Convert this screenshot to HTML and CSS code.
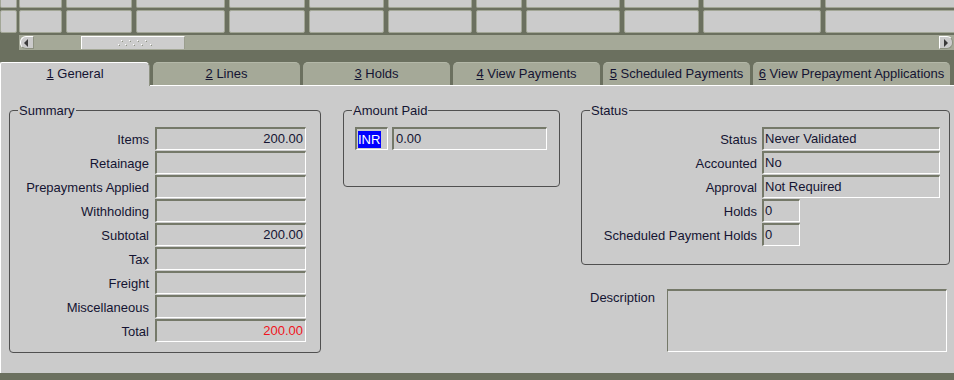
FILE: index.html
```html
<!DOCTYPE html>
<html>
<head>
<meta charset="utf-8">
<link rel="stylesheet" href="styles.css">
</head>
<body>
<div class="table">
  <div class="row row-top">
    <div class="cell"></div><div class="cell"></div><div class="cell"></div><div class="cell"></div>
    <div class="cell"></div><div class="cell"></div><div class="cell"></div><div class="cell"></div>
    <div class="cell"></div><div class="cell"></div><div class="cell"></div><div class="cell"></div>
  </div>
  <div class="row row-main">
    <div class="cell"></div><div class="cell"></div><div class="cell"></div><div class="cell"></div>
    <div class="cell"></div><div class="cell"></div><div class="cell"></div><div class="cell"></div>
    <div class="cell"></div><div class="cell"></div><div class="cell"></div><div class="cell"></div>
  </div>
  <div class="hscroll">
    <div class="sb-btn sb-left">
      <svg width="6" height="8" viewBox="0 0 6 8"><path d="M4 0 L4 8 L0 4 Z" fill="#3a3a3a"/></svg>
    </div>
    <div class="thumb">
      <svg width="36" height="7" viewBox="0 0 36 7">
        <g fill="#ffffff">
          <rect x="3" y="0" width="1" height="1"/><rect x="11" y="0" width="1" height="1"/><rect x="19" y="0" width="1" height="1"/><rect x="27" y="0" width="1" height="1"/>
          <rect x="0" y="4" width="1" height="1"/><rect x="7" y="4" width="1" height="1"/><rect x="15" y="4" width="1" height="1"/><rect x="23" y="4" width="1" height="1"/><rect x="32" y="4" width="1" height="1"/>
        </g>
        <g fill="#8e9282">
          <rect x="4" y="1" width="1" height="1"/><rect x="12" y="1" width="1" height="1"/><rect x="20" y="1" width="1" height="1"/><rect x="28" y="1" width="1" height="1"/>
          <rect x="1" y="5" width="1" height="1"/><rect x="8" y="5" width="1" height="1"/><rect x="16" y="5" width="1" height="1"/><rect x="24" y="5" width="1" height="1"/><rect x="33" y="5" width="1" height="1"/>
        </g>
      </svg>
    </div>
    <div class="sb-fill"></div>
    <div class="sb-btn sb-right">
      <svg width="6" height="8" viewBox="0 0 6 8"><path d="M1 0 L1 8 L5 4 Z" fill="#3a3a3a"/></svg>
    </div>
  </div>
</div>

<div class="tabs">
  <div class="tab active"><u>1</u> General</div>
  <div class="tab"><u>2</u> Lines</div>
  <div class="tab"><u>3</u> Holds</div>
  <div class="tab"><u>4</u> View Payments</div>
  <div class="tab"><u>5</u> Scheduled Payments</div>
  <div class="tab tab-wide"><u>6</u> View Prepayment Applications</div>
</div>

<div class="panel">
  <fieldset class="box summary">
    <legend>Summary</legend>
    <div class="box-body">
      <div class="frow"><span class="lbl">Items</span><div class="field num">200.00</div></div>
      <div class="frow"><span class="lbl">Retainage</span><div class="field num"></div></div>
      <div class="frow"><span class="lbl">Prepayments Applied</span><div class="field num"></div></div>
      <div class="frow"><span class="lbl">Withholding</span><div class="field num"></div></div>
      <div class="frow"><span class="lbl">Subtotal</span><div class="field num">200.00</div></div>
      <div class="frow"><span class="lbl">Tax</span><div class="field num"></div></div>
      <div class="frow"><span class="lbl">Freight</span><div class="field num"></div></div>
      <div class="frow"><span class="lbl">Miscellaneous</span><div class="field num"></div></div>
      <div class="frow"><span class="lbl">Total</span><div class="field num red">200.00</div></div>
    </div>
  </fieldset>

  <fieldset class="box amount">
    <legend>Amount Paid</legend>
    <div class="box-body amount-body">
      <div class="field cur"><span class="sel">INR</span></div>
      <div class="field amt">0.00</div>
    </div>
  </fieldset>

  <div class="col3">
    <fieldset class="box status">
      <legend>Status</legend>
      <div class="box-body">
        <div class="srow"><span class="lbl">Status</span><div class="field txt">Never Validated</div></div>
        <div class="srow"><span class="lbl">Accounted</span><div class="field txt">No</div></div>
        <div class="srow"><span class="lbl">Approval</span><div class="field txt">Not Required</div></div>
        <div class="srow"><span class="lbl">Holds</span><div class="field txt short">0</div></div>
        <div class="srow"><span class="lbl">Scheduled Payment Holds</span><div class="field txt short">0</div></div>
      </div>
    </fieldset>
    <div class="desc">
      <span class="desc-lbl">Description</span>
      <div class="field desc-field"></div>
    </div>
  </div>
</div>
</body>
</html>
```

FILE: styles.css
```css
* { box-sizing: border-box; }

html, body {
  margin: 0;
  padding: 0;
}

body {
  width: 954px;
  height: 380px;
  overflow: hidden;
  background: #6b705f;
  font-family: "Liberation Sans", Arial, sans-serif;
  font-size: 13px;
  color: #141432;
}

/* ---------- multi-row table at top ---------- */
.row {
  display: grid;
  grid-template-columns: 19px 47px 70px 93px 80px 79px 88px 50px 98px 79px 122px 1fr;
}

.cell {
  background: #cbcbcb;
  border: 1px solid #a2a696;
  border-radius: 2px;
  margin-right: 4px;
}

.cell:first-child { margin-right: 2px; }
.cell:last-child { margin-right: -12px; }

.row-top { height: 8px; }
.row-top .cell {
  border-top: none;
  border-radius: 0 0 2px 2px;
}

.row-main {
  height: 23px;
  margin-top: 2px;
}

.hscroll {
  display: flex;
  align-items: center;
  height: 15px;
  margin-top: 2px;
  margin-left: 19px;
  background: #a5a998;
}

.sb-btn {
  width: 14px;
  height: 13px;
  background: #cbcbcb;
  display: flex;
  align-items: center;
  justify-content: center;
}

.sb-left {
  margin-left: 1px;
  border-radius: 6px 0 0 6px;
  border: 1px solid #ffffff;
  border-right-color: #8e9282;
  border-bottom-color: #8e9282;
}

.sb-right {
  margin-right: 1px;
  border-radius: 0 6px 6px 0;
  border: 1px solid #ffffff;
  border-right-color: #8e9282;
  border-bottom-color: #8e9282;
}

.thumb {
  margin-left: 47px;
  width: 104px;
  height: 13px;
  background: #cdcdcd;
  border-top: 1px solid #ffffff;
  border-left: 1px solid #ffffff;
  border-right: 1px solid #9a9e8e;
  display: flex;
  align-items: center;
  justify-content: center;
  padding-left: 6px;
}

.sb-fill { flex: 1; }

/* ---------- tabs ---------- */
.tabs {
  display: flex;
  gap: 3px;
  height: 24px;
  margin-top: 12px;
  background: linear-gradient(to top, #ffffff 1px, transparent 1px);
  align-items: flex-start;
}

.tab {
  width: 147px;
  height: 23px;
  background: #a5a998;
  border-radius: 5px 5px 0 0;
  border-top: 1px solid #b4b8a8;
  text-align: center;
  line-height: 22px;
  font-size: 13px;
  color: #141432;
  white-space: nowrap;
}

.tab u { text-decoration: underline; text-underline-offset: 1px; }

.tab.active {
  width: 150px;
  height: 24px;
  background: #cbcbcb;
  border-top: 1px solid #ffffff;
  border-left: 1px solid #ffffff;
  border-right: 1px solid #8e9282;
  border-radius: 2px 5px 0 0;
}

.tab-wide { width: 197px; }

/* ---------- panel ---------- */
.panel {
  display: flex;
  align-items: flex-start;
  height: 287px;
  background: #cbcbcb;
  border-left: 1px solid #ffffff;
  padding: 17px 0 0 8px;
}

.box {
  margin: 0;
  padding: 0;
  border: 1px solid #505050;
  border-radius: 4px;
  min-width: 0;
}

.box legend {
  margin-left: 8px;
  padding: 0 1px;
  line-height: 15px;
  font-size: 13px;
  color: #141432;
}

.summary { width: 312px; }
.summary .box-body { padding: 9px 13px 10px 6px; }

.frow {
  display: grid;
  grid-template-columns: 133px 151px;
  column-gap: 6px;
  align-items: center;
  height: 23px;
  margin-bottom: 1px;
}

.frow:last-child { margin-bottom: 0; }

.lbl {
  text-align: right;
  white-space: nowrap;
  line-height: 15px;
  padding-top: 1px;
}

.field {
  height: 23px;
  background: #cbcbcb;
  border-top: 2px solid #757969;
  border-left: 2px solid #757969;
  border-right: 1px solid #ffffff;
  border-bottom: 1px solid #ffffff;
  line-height: 19px;
  font-size: 13px;
  color: #141432;
  white-space: nowrap;
  overflow: hidden;
}

.num { text-align: right; padding-right: 2px; }
.red { color: #f01420; }
.txt { padding-left: 1px; }

.amount {
  width: 217px;
  margin-left: 22px;
}

.amount-body {
  display: flex;
  gap: 4px;
  padding: 9px 12px 36px 11px;
}

.field.cur {
  width: 33px;
  padding-left: 1px;
  display: flex;
  align-items: center;
}

.sel {
  background: #0000ff;
  color: #ffffff;
  line-height: 17px;
  padding: 0 1px 0 0;
}

.field.amt {
  width: 155px;
  padding-left: 2px;
}

.col3 {
  margin-left: 21px;
  display: flex;
  flex-direction: column;
}

.status { width: 369px; }
.status .box-body { padding: 9px 9px 18px 5px; }

.srow {
  display: grid;
  grid-template-columns: 170px 178px;
  column-gap: 5px;
  align-items: center;
  height: 23px;
  margin-bottom: 1px;
}

.srow:last-child { margin-bottom: 0; }

.field.short { width: 38px; }

.desc {
  display: flex;
  margin-top: 24px;
  padding-left: 9px;
}

.desc-lbl {
  width: 77px;
  line-height: 15px;
  padding-top: 1px;
}

.desc-field {
  width: 280px;
  height: 63px;
  border-left-width: 1px;
}
```
